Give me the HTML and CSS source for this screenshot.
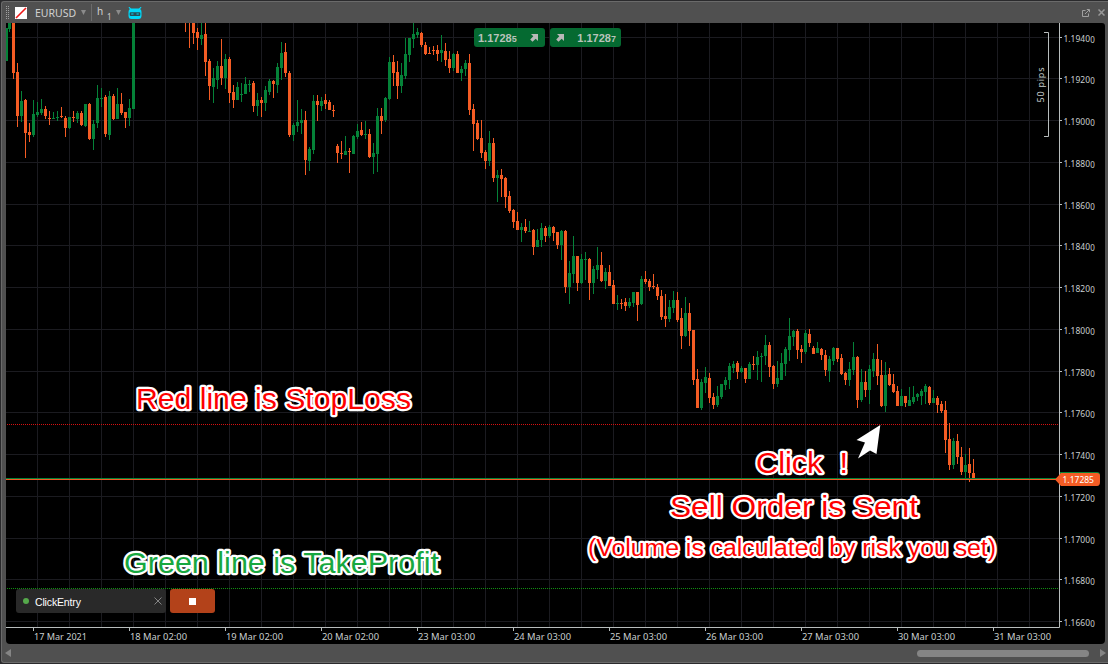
FILE: index.html
```html
<!DOCTYPE html>
<html lang="en">
<head>
<meta charset="utf-8">
<title>EURUSD h1</title>
<link rel="stylesheet" href="styles.css">
</head>
<body>
<div class="window">
  <header class="toolbar">
    <svg class="grip" width="4" height="13" viewBox="0 0 4 13" shape-rendering="crispEdges"><path d="M.5 0v13M2.5 0v13" stroke="#a0a0a0" stroke-dasharray="1 1"/></svg>
    <svg class="flag" width="12" height="12" viewBox="0 0 12 12"><path d="M0 0h12v12H0z" fill="#fff"/><path d="M1 11 11 1" stroke="#f01818" stroke-width="1.6"/></svg>
    <span class="symbol">EURUSD</span>
    <svg class="caret" width="5" height="5" viewBox="0 0 5 5"><path d="M0 0h5L2.5 5z" fill="#8b8b8b"/></svg>
    <span class="divider"></span>
    <span class="period">h<sub>1</sub></span>
    <svg class="caret caret-period" width="5" height="5" viewBox="0 0 5 5"><path d="M0 0h5L2.5 5z" fill="#8b8b8b"/></svg>
    <svg class="robot" width="14" height="12" viewBox="0 0 14 12"><path d="M.9.2 3 2.400M13.1.2 11 2.400" stroke="#00d8f8" stroke-width="1.200"/><path d="M3.500 1.500h7q2.800 0 3 3.500v3.500q0 3.500-3 3.500h-7Q.5 12 .5 8.500V5q.2-3.500 3-3.500z" fill="#00d8f8"/><path d="M2.500 5.200h9q.8 0 .8.800v2q0 1-1 1H2.700q-1 0-1-1V6q0-.8.8-.8z" fill="#264e58"/><path d="M3.200 7h2.300M8.500 7h2.300" stroke="#00d8f8"/></svg>
    <span class="spacer"></span>
    <svg class="detach" width="8" height="8" viewBox="0 0 8 8" fill="none" stroke="#a0a0a0"><path d="M3.500 1.500H.5v6h6V4.500M3 5 7 1M4.800.5h2.700v2.700"/></svg>
    <svg class="close" width="7" height="7" viewBox="0 0 7 7"><path d="m.5.5 6 6m0-6-6 6" stroke="#989898" stroke-width="1.500"/></svg>
  </header>
  <main class="chart">
    <svg id="plot" class="plot" width="1099" height="621" viewBox="6 23 1099 621"></svg>
    <div class="quotes">
      <button class="quote"><span>1.1728<small>5</small></span><svg width="8" height="8" viewBox="0 0 8 8"><path d="M1 0h7v7L5.700 4.700 2.500 7.800.2 5.500 3.300 2.300z" fill="#b8b8b8"/></svg></button>
      <button class="quote"><svg width="8" height="8" viewBox="0 0 8 8"><path d="M1 0h7v7L5.700 4.700 2.500 7.800.2 5.500 3.300 2.300z" fill="#b8b8b8"/></svg><span>1.1728<small>7</small></span></button>
    </div>
    <div class="robots">
      <div class="instance"><i class="status"></i><span>ClickEntry</span><svg width="8" height="8" viewBox="0 0 8 8"><path d="m.5.5 7 7m0-7-7 7" stroke="#858585"/></svg></div>
      <button class="stop"><i></i></button>
    </div>
  </main>
  <footer class="scroll">
    <svg class="back" width="6" height="8" viewBox="0 0 6 8"><path d="M6 0v8L0 4z" fill="#858585"/></svg>
    <span class="thumb"></span>
    <svg width="6" height="8" viewBox="0 0 6 8"><path d="M0 0v8l6-4z" fill="#858585"/></svg>
  </footer>
</div>
<script src="chart.js"></script>
</body>
</html>
```
FILE: styles.css
```css
* { box-sizing: border-box; }
body {
  margin: 0;
  background: #2a2a2c;
  font-family: "Noto Sans", "DejaVu Sans", sans-serif;
  overflow: hidden;
}
.window {
  width: 1107px;
  height: 662px;
  margin: 1px 0 0 1px;
  padding: 0 2px 0 4px;
  background: #505050;
  border: 1px solid #6a6a6a;
  border-right: 0;
  border-radius: 3px 0 0 3px;
  display: flex;
  flex-direction: column;
}
.toolbar {
  height: 21px;
  display: flex;
  align-items: center;
  color: #d0d0d0;
}
.flag { margin-left: 5px; }
.symbol { margin-left: 8px; width: 42px; font-size: 10.5px; line-height: 18px; padding-top: 1px; }
.caret { margin-left: 4px; }
.divider { width: 1px; height: 17px; background: #6b6b6b; margin-left: 5px; }
.period { position: relative; margin-left: 5px; width: 15px; font-size: 10px; line-height: 17px; height: 20px; }
.period sub { position: absolute; left: 10px; top: 8px; font-size: 8px; line-height: 12px; }
.robot { margin-left: 7px; }
.spacer { flex: 1; }
.close { margin: 0 1px 0 8px; }
.chart { position: relative; height: 621px; background: #000; border-radius: 0 3px 4px 4px; overflow: hidden; width: 1099px; }
.plot { display: block; }
.grid { stroke: #1b1b20; fill: none; }
.axis { stroke: #b8bdbd; fill: none; }
.up { fill: #058238; }
.down { fill: #f45c24; }
.label { fill: #c8cece; font-size: 9px; }
.minor { font-size: 8px; }
.note { font-family: "Liberation Sans", Arial, sans-serif; fill: #fe0000; stroke: #fff; stroke-width: 4.4px; stroke-linejoin: round; paint-order: stroke; white-space: pre; }
.note-profit { fill: #18a840; }
.quotes { position: absolute; left: 468px; top: 5px; display: flex; gap: 5px; }
.quote {
  display: flex;
  align-items: center;
  justify-content: space-between;
  width: 71px;
  height: 19px;
  padding: 0 7px 0 4px;
  border: 0;
  border-radius: 3px;
  background: #056a31;
  color: #b9c3bb;
  font: bold 11px "Liberation Sans", Arial, sans-serif;
}
.quote + .quote { padding: 0 5px 0 6px; }
.quote small { font-size: 9px; }
.robots { position: absolute; left: 10px; top: 566px; display: flex; gap: 4px; }
.instance {
  display: flex;
  align-items: center;
  width: 150px;
  height: 24px;
  padding: 0 4px 0 7px;
  border-radius: 3px;
  background: #292929;
  color: #fff;
  font: 10.5px "Liberation Sans", Arial, sans-serif;
  letter-spacing: -.15px;
}
.instance span { flex: 1; margin-left: 6px; padding-top: 1px; }
.status { width: 6px; height: 6px; border-radius: 50%; background: #55a94b; }
.stop {
  display: flex;
  align-items: center;
  justify-content: center;
  width: 45px;
  height: 24px;
  padding: 0;
  border: 0;
  border-radius: 3px;
  background: #b3421a;
}
.stop i { width: 7px; height: 7px; background: #fff; }
.scroll { flex: 1; display: flex; align-items: center; }
.back { margin-left: -1px; }
.thumb { margin-left: auto; margin-right: 11px; width: 172px; height: 7px; border-radius: 4px; background: #858585; }
```
FILE: chart.js
```js
const plot = document.getElementById('plot');
const NS = 'http://www.w3.org/2000/svg';

function add(tag, attrs, text) {
  const el = document.createElementNS(NS, tag);
  for (const key in attrs) el.setAttribute(key, attrs[key]);
  if (text) el.textContent = text;
  plot.appendChild(el);
  return el;
}

// Grid
const rows = [37, 78, 120, 162, 204, 245, 287, 329, 371, 412, 454, 496, 538, 579, 621];
let grid = '';
for (const y of rows) grid += `M6 ${y + .5}H1059`;
for (let x = 37; x < 1059; x += 32) grid += `M${x + .5} 23V627`;
add('path', { d: grid, class: 'grid' });

// Stop-loss and take-profit levels
add('path', { d: 'M7 424.5H1058', stroke: '#d81010', 'stroke-dasharray': '1 1' });
add('path', { d: 'M7 588.5H1058', stroke: '#109010', 'stroke-dasharray': '1 1' });

// Candles: runs of [first x, "direction high bodyTop bodyBottom low; ..."], 4px apart
const runs = [
  [5, 'g 28 28 61 61;g 23 23 29 32;o 23 23 73 79;o 63 72 116 127;g 91 101 116 122;o 99 100 133 158;o 123 132 135 142;g 100 114 135 137;g 102 112 115 117;g 99 109 113 115;o 106 109 116 119;o 111 118 119 125;g 112 118 119 119;g 111 117 118 121;o 107 116 117 118;o 116 118 128 137;g 117 117 128 129;o 111 117 118 122;g 111 113 119 123;o 111 113 125 126;g 104 104 126 127;o 103 104 139 140;g 120 124 139 150;g 85 98 123 128;g 88 98 99 107;o 95 97 134 137;g 91 96 135 140;o 94 96 119 120;g 88 104 119 119;o 93 104 113 115;o 112 112 118 128;g 99 108 118 126;g 23 23 109 109'],
  [185, 'o 23 23 23 32;o 23 23 23 48;o 23 23 33 44;o 28 32 38 50;g 23 35 39 45;o 23 34 62 76;o 59 61 86 100;g 68 78 87 103;g 61 66 80 89;o 39 66 78 85;g 54 59 78 89;o 57 59 93 103;o 85 92 100 108;g 82 87 100 100;g 83 94 95 102;g 77 84 94 94;g 80 84 85 92;o 81 83 106 112;g 93 100 106 116;o 97 100 103 117;g 86 90 103 111;g 79 81 92 95;o 80 81 84 98;g 63 67 85 93;g 42 53 68 80;o 43 52 73 77;o 71 73 135 137;g 123 125 135 141;g 100 122 126 132;g 109 120 123 134;o 111 120 160 175;g 147 149 161 171;g 95 101 150 154;o 95 101 105 121;g 97 101 106 111;o 94 100 104 109;o 100 102 110 110;o 105 110 111 117'],
  [337, 'o 144 146 153 163;o 141 153 154 159;g 136 151 155 155;o 148 151 152 173;g 135 136 154 154;g 124 131 137 139;o 122 130 135 136;g 121 134 135 139;o 129 134 157 158;g 143 153 157 174;g 108 116 154 172;o 108 116 121 134;g 97 98 120 122;g 57 62 99 100;o 55 62 73 86;o 61 72 86 99;g 63 75 86 93;g 38 54 76 79;g 38 38 55 62;g 23 34 39 48;g 28 32 35 38;o 32 33 45 47;o 42 45 54 55;o 47 53 54 54;o 46 50 51 55;o 45 50 54 61;g 35 50 53 62;o 43 51 60 66;o 51 59 68 73;g 53 54 68 71;o 51 54 73 73;g 66 69 73 81;g 60 63 69 76;o 54 63 110 115'],
  [473, 'o 104 109 124 151;o 120 123 139 140;o 120 138 153 158;o 150 152 161 169;g 131 143 161 166;o 138 143 178 182;g 170 175 178 202;o 169 175 179 197;o 177 178 197 208;o 191 196 211 213;o 209 210 222 228;o 212 221 230 230;g 223 227 230 242;o 219 227 231 233;g 221 231 232 232;o 229 230 247 255;g 229 240 247 247;g 223 228 240 247;o 226 228 236 242;g 225 227 236 238;o 226 227 233 241;o 232 232 245 249;g 230 231 245 260;o 230 231 287 293;g 261 273 287 304;g 236 256 274 283;o 256 256 283 291;g 254 259 283 284;g 252 259 260 280;o 258 259 283 300;g 266 269 283 294;g 247 265 270 279;o 252 265 281 282'],
  [605, 'g 268 272 281 289;o 265 272 286 286;o 280 285 304 304;g 295 303 304 310;o 299 303 304 309;o 298 302 306 311;g 298 302 306 308;g 292 292 303 307;o 292 292 305 321;g 276 279 304 305;o 271 279 282 284;o 279 281 287 291;o 274 286 287 289;o 284 287 296 300;o 290 296 317 320;o 294 316 319 327;g 300 307 319 322;g 291 300 308 313;o 292 300 320 322;o 308 318 336 349;g 297 313 336 337;o 303 313 331 346;o 330 330 380 385;o 369 379 408 408;g 379 382 408 410;g 367 377 383 393;o 373 378 398 403;o 393 397 405 409;g 386 396 405 407;g 384 384 397 399;g 377 380 385 390;g 363 366 380 389;g 361 364 368 373;o 361 363 372 379;g 366 368 372 373;o 368 368 379 383;g 362 364 379 379;o 356 364 365 370;g 351 357 365 380;g 353 356 357 382;g 335 345 356 365;o 342 345 367 377;o 365 366 384 389;g 361 378 384 387;g 353 363 380 380'],
  [785, 'g 347 349 364 376;g 318 336 350 361;g 330 331 337 346;o 329 331 350 359;o 345 349 352 363;g 330 333 352 354;o 329 334 343 347;o 346 348 354 354;g 342 348 353 353;o 348 349 355 360;o 350 355 370 376;g 356 359 371 382;g 347 348 361 365;o 348 348 359 362;o 354 358 374 375;o 372 373 380 385;g 362 369 380 386;g 342 357 370 375;o 356 357 400 408;g 369 382 400 402;o 371 382 390 397;g 365 369 390 404;g 353 359 371 377;o 344 359 376 385;o 360 375 406 407;g 362 375 406 412;o 368 374 385 386;o 374 384 392 393;o 386 391 406 406;g 389 396 406 406;o 396 396 403 407;g 387 400 406 406;g 386 397 402 404;g 393 394 397 401;g 389 391 396 405;g 384 386 392 404;o 386 387 403 405;g 390 398 403 403;o 396 398 405 413;o 401 404 411 413;o 401 410 440 453;o 423 439 465 470;g 438 441 465 469;o 434 441 457 464;o 447 457 472 475;g 454 465 472 479;o 448 464 473 482;o 459 473 478 478']
];
const shapes = { g: '', o: '' };
for (const [start, data] of runs) {
  data.split(';').forEach((item, i) => {
    const [dir, ...v] = item.split(' ');
    const [high, top, bottom, low] = v.map(Number);
    const x = start + i * 4;
    shapes[dir] += `M${x} ${high}h1V${low}h-1z`;
    // The candle cut by the left edge keeps a 2px body
    const right = x === 5 ? x + 3 : x + 2;
    if (bottom > top) shapes[dir] += `M${x - 1} ${top}H${right}V${bottom}H${x - 1}z`;
  });
}
add('path', { d: shapes.g, class: 'up' });
add('path', { d: shapes.o, class: 'down' });

// Current ask and bid
add('path', { d: 'M6 478h1052v1H6z', class: 'up' });
add('path', { d: 'M6 479h1052v1H6z', class: 'down' });

// Axes
let axis = 'M6 627.5H1059.5V23';
for (const y of rows) axis += `M1060 ${y + .5}h2`;
for (let x = 33; x < 1059; x += 96) axis += `M${x + .5} 628v3`;
add('path', { d: axis, class: 'axis' });

rows.forEach((y, i) => {
  const price = (1.194 - i * .002).toFixed(4);
  add('text', { x: 1063.5, y: y + 5, class: 'label', textLength: 26.5, lengthAdjust: 'spacingAndGlyphs' }, price);
  add('text', { x: 1090.3, y: y + 6, class: 'label minor' }, '0');
});
['17 Mar 2021', '18 Mar 02:00', '19 Mar 02:00', '20 Mar 02:00', '23 Mar 03:00', '24 Mar 03:00', '25 Mar 03:00', '26 Mar 03:00', '27 Mar 03:00', '30 Mar 03:00', '31 Mar 03:00'].forEach((date, i) => {
  add('text', { x: 34 + i * 96, y: 640, class: 'label', textLength: i ? 57 : 53, lengthAdjust: 'spacingAndGlyphs' }, date);
});

// Scale bracket
add('path', { d: 'M1044 32.5H1048.5V136.5H1044', class: 'axis' });
add('text', { transform: 'translate(1044 102.500) rotate(-90)', class: 'label', textLength: 35 }, '50 pips');

// Price tag
add('path', { d: 'M1060 472h37q3 0 3 3v4h-40z', class: 'up' });
add('path', { d: 'M1055 479.500 1061 473h36q3 0 3 3v6q0 4-3 4h-36z', class: 'down' });
add('text', { x: 1062.5, y: 482.5, class: 'label', style: 'fill:#fff', textLength: 31.5, lengthAdjust: 'spacingAndGlyphs' }, '1.17285');

// Notes
function note(text, x, y, size, width, extra = '') {
  add('text', { x, y, class: 'note ' + extra, 'font-size': size, textLength: width, lengthAdjust: 'spacingAndGlyphs' }, text);
}
note('Red line is StopLoss', 136, 409, 29, 275);
note('Click  !', 756, 473, 29, 92);
note('Sell Order is Sent', 670, 517, 29, 248);
note('(Volume is calculated by risk you set)', 588, 556, 23.5, 408);
note('Green line is TakeProfit', 124, 573, 29, 315, 'note-profit');
add('path', { d: 'M880.300 425 856.500 440 865 442.500 858 458.500 870 450.500 876.500 454z', fill: '#fff' });
```
